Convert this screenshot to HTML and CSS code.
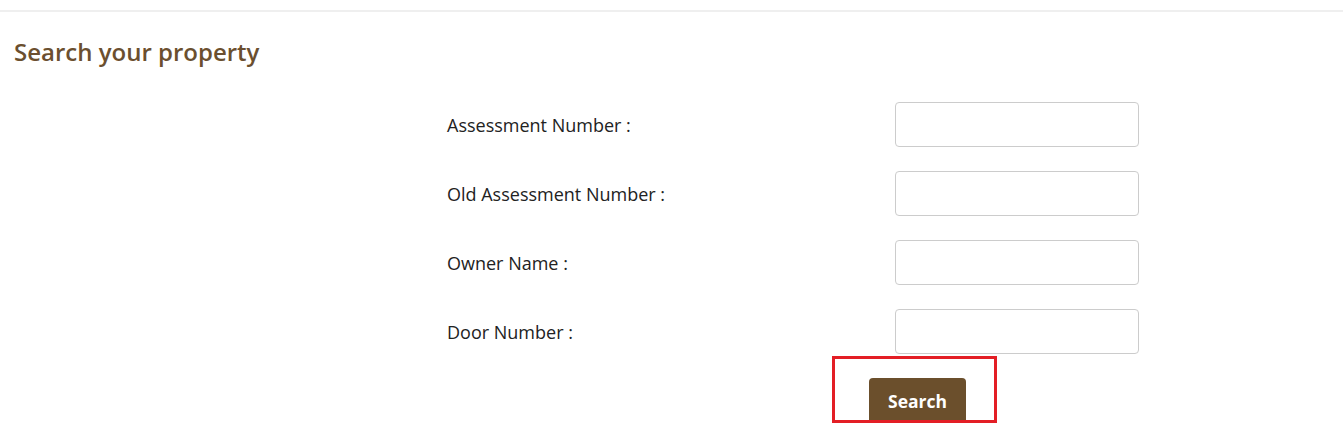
FILE: index.html
```html
<!DOCTYPE html>
<html>
<head>
<meta charset="utf-8">
<link rel="stylesheet" href="styles.css">
</head>
<body>
<div class="page">
  <h2 class="title">Search your property</h2>
  <form class="form">
    <div class="row"><label class="label">Assessment Number :</label><input class="field" type="text"></div>
    <div class="row"><label class="label">Old Assessment Number :</label><input class="field" type="text"></div>
    <div class="row"><label class="label">Owner Name :</label><input class="field" type="text"></div>
    <div class="row"><label class="label">Door Number :</label><input class="field" type="text"></div>
    <div class="actions">
      <button class="btn" type="button">Search</button>
      <div class="highlight"></div>
    </div>
  </form>
</div>
</body>
</html>
```
FILE: styles.css
```css
html, body {
  margin: 0;
  padding: 0;
  background: #fff;
  font-family: "Open Sans", "Liberation Sans", sans-serif;
}
.page {
  margin-top: 10px;
  border-top: 2px solid #efefef;
  height: 413px;
  overflow: hidden;
}
.title {
  margin: 24px 0 0 14px;
  font-size: 24px;
  font-weight: 600;
  line-height: 32px;
  color: #6b4f2f;
}
.form {
  margin-top: 34px;
  padding-left: 447px;
}
.row {
  display: flex;
  align-items: center;
  height: 45px;
  margin-bottom: 24px;
}
.label {
  width: 448px;
  font-size: 18px;
  color: #222;
  padding-top: 1px;
}
.field {
  box-sizing: border-box;
  width: 244px;
  height: 45px;
  border: 1px solid #ccc;
  border-radius: 4px;
  margin: 0;
}
.actions {
  position: relative;
  margin-top: -2px;
  padding-left: 422px;
  padding-top: 2px;
}
.btn {
  display: block;
  width: 97px;
  height: 44px;
  background: #6b4f2c;
  color: #fff;
  border: none;
  border-radius: 4px 4px 0 0;
  font-family: "Open Sans", "Liberation Sans", sans-serif;
  font-size: 17.5px;
  font-weight: 700;
  padding: 1px 0 0;
}
.highlight {
  position: absolute;
  left: 385px;
  top: -20px;
  width: 159px;
  height: 61px;
  border: 3px solid #e31e25;
}
```
